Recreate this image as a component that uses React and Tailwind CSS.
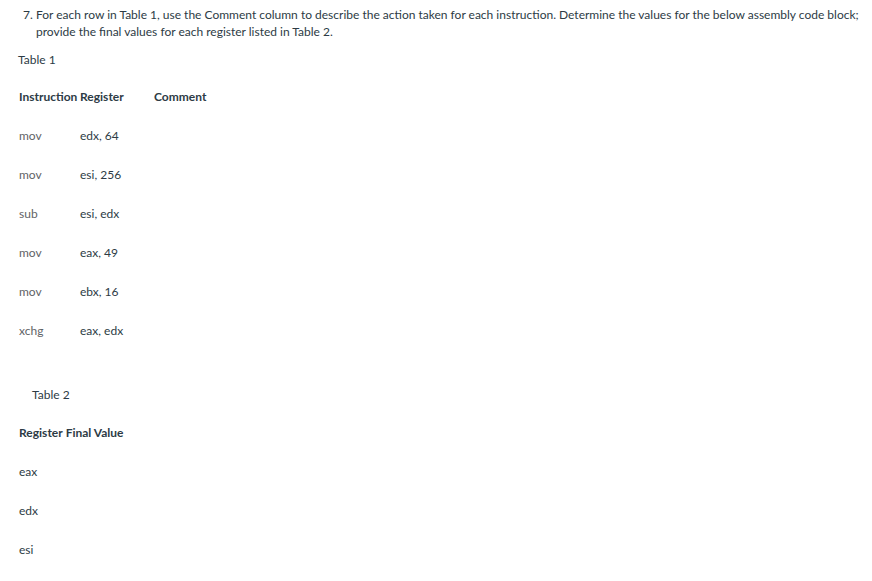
import React from "react";

// Rows of the first table: instruction + operand register
const instructions = [
    ["mov", "edx, 64"],
    ["mov", "esi, 256"],
    ["sub", "esi, edx"],
    ["mov", "eax, 49"],
    ["mov", "ebx, 16"],
    ["xchg", "eax, edx"],
];

const registers = ["eax", "edx", "esi"];

const App = () => {
    return (
        <div className="min-h-[581px] w-[872px] bg-white text-[12px] leading-[17px] text-[#2d3b45] [font-family:Lato,'Liberation_Sans',sans-serif]">
            {/* Question text */}
            <div className="flex pl-[23px] pr-2 pt-[6px]">
                <span className="w-[13px] shrink-0">7.</span>
                <p>
                    For each row in Table 1, use the Comment column to describe the action taken for each
                    instruction. Determine the values for the below assembly code block; provide the final
                    values for each register listed in Table 2.
                </p>
            </div>

            {/* Table 1 */}
            <p className="mt-[11px] pl-[18px]">Table 1</p>
            <div className="mt-[20px] flex flex-col pl-[19px]">
                <div className="flex h-[39px] items-start font-bold">
                    <span className="w-[61px]">Instruction</span>
                    <span className="w-[74px]">Register</span>
                    <span>Comment</span>
                </div>
                {instructions.map(([op, reg], i) => (
                    <div key={i} className="flex h-[39px] items-start">
                        <span className="w-[61px] text-[#5f6366]">{op}</span>
                        <span>{reg}</span>
                    </div>
                ))}
            </div>

            {/* Table 2 */}
            <p className="mt-[25px] pl-[32px]">Table 2</p>
            <div className="mt-[21px] flex flex-col pl-[19px]">
                <div className="flex h-[39px] items-start font-bold">
                    <span className="mr-[3px]">Register</span>
                    <span>Final Value</span>
                </div>
                {registers.map((r) => (
                    <div key={r} className="flex h-[39px] items-start">
                        <span>{r}</span>
                    </div>
                ))}
            </div>
        </div>
    );
};

export default App;
